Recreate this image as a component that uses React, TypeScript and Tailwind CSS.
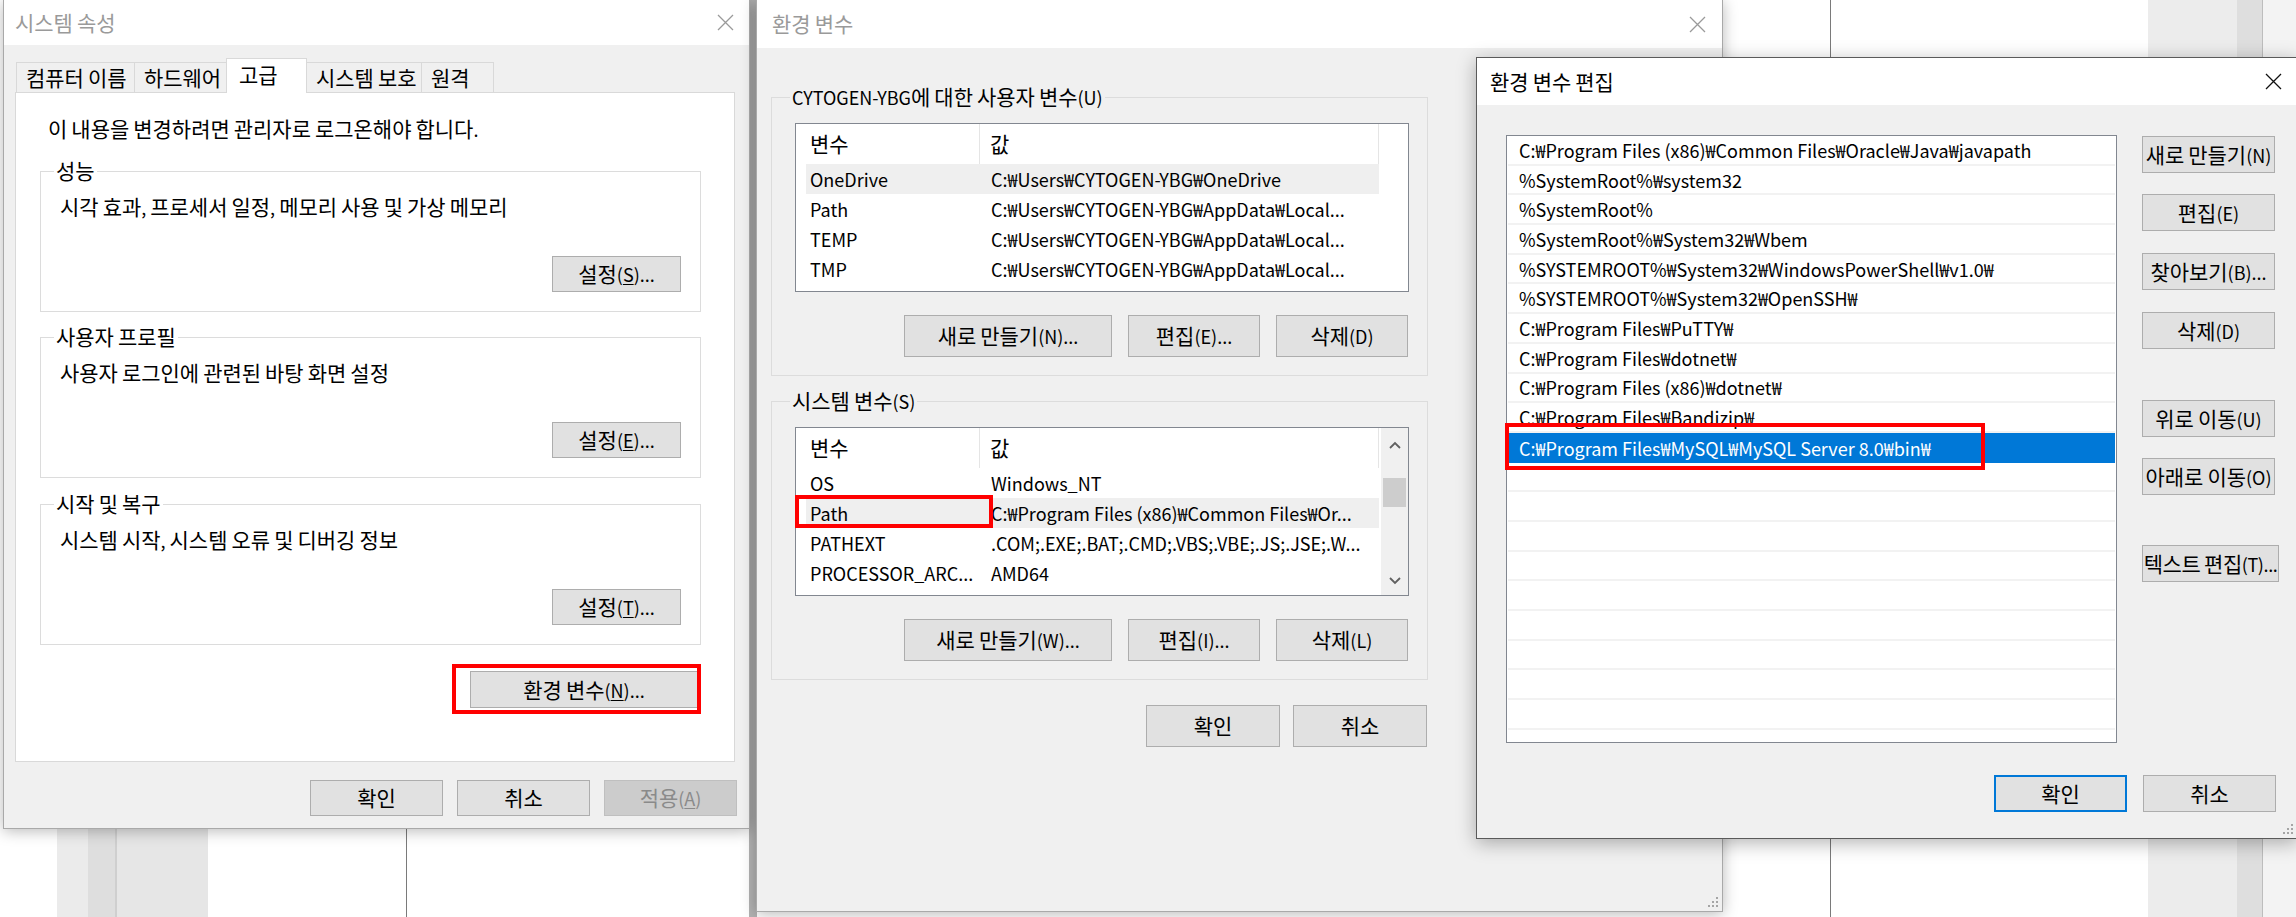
import React from 'react';

// Windows 10 style dialogs: 시스템 속성 / 환경 변수 / 환경 변수 편집

// Malgun Gothic draws Hangul wider than Noto Sans CJK KR, so Hangul runs get a slightly larger size
const HANGUL = /([\u3131-\u318E\uAC00-\uD7A3]+)/;

function kr(text: string): React.ReactNode {
  return (
    <span>
      {text.split(HANGUL).map((part, i) =>
        i % 2 === 1 ? (
          <span key={i} className="text-[1.165em] leading-[0]">
            {part}
          </span>
        ) : (
          part
        ),
      )}
    </span>
  );
}

type BtnProps = {
  children: React.ReactNode;
  className?: string;
  disabled?: boolean;
  primary?: boolean;
};

function Btn({ children, className = '', disabled, primary }: BtnProps) {
  const tone = primary
    ? 'border-2 border-[#0078d7] bg-[#e1e1e1] text-black'
    : disabled
      ? 'border border-[#bfbfbf] bg-[#cccccc] text-[#8a8a8a]'
      : 'border border-[#adadad] bg-[#e1e1e1] text-black';
  return (
    <button type="button" className={['flex shrink-0 items-center justify-center whitespace-nowrap text-[18px] leading-none', tone, className].join(' ')}>
      {typeof children === 'string' ? kr(children) : <span>{children}</span>}
    </button>
  );
}

function CloseX({ dark }: { dark?: boolean }) {
  return (
    <svg width="17" height="17" viewBox="0 0 17 17" className={dark ? 'text-[#111]' : 'text-[#9a9a9a]'}>
      <path d="M1 1L16 16M16 1L1 16" stroke="currentColor" strokeWidth="1.3" fill="none" />
    </svg>
  );
}

function Grip() {
  const dots = [
    [9, 1],
    [9, 5],
    [5, 5],
    [9, 9],
    [5, 9],
    [1, 9],
  ];
  return (
    <svg width="11" height="11" viewBox="0 0 11 11" className="absolute bottom-[4px] right-[4px]">
      {dots.map(([x, y]) => (
        <rect key={`${x}-${y}`} x={x} y={y} width="2" height="2" fill="#a5a5a5" />
      ))}
    </svg>
  );
}

function Chevron({ up }: { up?: boolean }) {
  return (
    <svg width="12" height="8" viewBox="0 0 12 8">
      <path d={up ? 'M1 7L6 2L11 7' : 'M1 1L6 6L11 1'} stroke="#606060" strokeWidth="1.8" fill="none" />
    </svg>
  );
}

function U({ children }: { children: React.ReactNode }) {
  return <span className="underline underline-offset-2">{children}</span>;
}

// =============================================================================
// Window 1: 시스템 속성
// =============================================================================

const TABS = [
  { label: '컴퓨터 이름', w: 'w-[119px]' },
  { label: '하드웨어', w: 'w-[93px]' },
  { label: '고급', w: 'w-[81px]', active: true },
  { label: '시스템 보호', w: 'w-[116px]' },
  { label: '원격', w: 'w-[73px]' },
];

function SettingsGroup({ label, desc, btn, className = '' }: { label: string; desc: string; btn: React.ReactNode; className?: string }) {
  return (
    <fieldset className={['w-[661px] border border-[#dcdcdc] px-[19px] pb-[19px]', className].join(' ')}>
      <legend className="ml-[-6px] px-[2px] leading-[24px]">{kr(label)}</legend>
      <div className="pt-[12px] leading-[24px]">{kr(desc)}</div>
      <div className="mt-[37px] flex justify-end">
        <Btn className="h-[36px] w-[129px]">{btn}</Btn>
      </div>
    </fieldset>
  );
}

function SystemProperties() {
  return (
    <div className="absolute left-[3px] top-0 flex h-[829px] w-[747px] flex-col border border-t-0 border-[#a9a9a9] bg-[#f0f0f0] shadow-[0_2px_14px_rgba(0,0,0,0.28)]">
      <div className="flex h-[45px] items-center justify-between bg-white pl-[11px] pr-[15px]">
        <span className="text-[#9a9a9a]">{kr('시스템 속성')}</span>
        <CloseX />
      </div>
      <div className="flex flex-1 flex-col pl-[11px] pt-[13px]">
        <div className="relative z-10 ml-[2px] flex h-[35px] items-end">
          {TABS.map((t) =>
            t.active ? (
              <div key={t.label} className={`${t.w} -ml-px flex h-[35px] items-start whitespace-nowrap border border-b-0 border-[#d9d9d9] bg-white pl-[12px] pt-[4px]`}>
                {kr(t.label)}
              </div>
            ) : (
              <div key={t.label} className={`${t.w} -ml-px mb-px flex h-[30px] items-center whitespace-nowrap border border-b-0 border-[#d9d9d9] bg-[#f0f0f0] pl-[9px]`}>
                {kr(t.label)}
              </div>
            ),
          )}
        </div>
        <div className="-mt-px h-[670px] w-[720px] border border-[#d9d9d9] bg-white pl-[24px] pt-[24px]">
          <div className="pl-[8px] leading-[24px]">{kr('이 내용을 변경하려면 관리자로 로그온해야 합니다.')}</div>
          <SettingsGroup
            className="mt-[18px]"
            label="성능"
            desc="시각 효과, 프로세서 일정, 메모리 사용 및 가상 메모리"
            btn={<>{kr('설정')}(<U>S</U>)...</>}
          />
          <SettingsGroup
            className="mt-[13px]"
            label="사용자 프로필"
            desc="사용자 로그인에 관련된 바탕 화면 설정"
            btn={<>{kr('설정')}(<U>E</U>)...</>}
          />
          <SettingsGroup
            className="mt-[14px]"
            label="시작 및 복구"
            desc="시스템 시작, 시스템 오류 및 디버깅 정보"
            btn={<>{kr('설정')}(<U>T</U>)...</>}
          />
          <div className="mt-[26px] flex w-[658px] justify-end">
            <Btn className="h-[37px] w-[228px]">
              {kr('환경 변수')}(<U>N</U>)...
            </Btn>
          </div>
        </div>
        <div className="mt-[18px] flex w-[722px] justify-end gap-[14px]">
          <Btn className="h-[36px] w-[133px]">확인</Btn>
          <Btn className="h-[36px] w-[133px]">취소</Btn>
          <Btn disabled className="h-[36px] w-[133px]">
            {kr('적용')}(<U>A</U>)
          </Btn>
        </div>
      </div>
    </div>
  );
}

// =============================================================================
// Window 2: 환경 변수
// =============================================================================

type VarRow = { name: string; value: string; selected?: boolean };

const USER_VARS: VarRow[] = [
  { name: 'OneDrive', value: 'C:₩Users₩CYTOGEN-YBG₩OneDrive', selected: true },
  { name: 'Path', value: 'C:₩Users₩CYTOGEN-YBG₩AppData₩Local...' },
  { name: 'TEMP', value: 'C:₩Users₩CYTOGEN-YBG₩AppData₩Local...' },
  { name: 'TMP', value: 'C:₩Users₩CYTOGEN-YBG₩AppData₩Local...' },
];

const SYSTEM_VARS: VarRow[] = [
  { name: 'OS', value: 'Windows_NT' },
  { name: 'Path', value: 'C:₩Program Files (x86)₩Common Files₩Or...', selected: true },
  { name: 'PATHEXT', value: '.COM;.EXE;.BAT;.CMD;.VBS;.VBE;.JS;.JSE;.W...' },
  { name: 'PROCESSOR_ARC...', value: 'AMD64' },
];

function VarList({ rows, scroll }: { rows: VarRow[]; scroll?: boolean }) {
  return (
    <div className="ml-[23px] flex h-[169px] w-[614px] overflow-hidden border border-[#828790] bg-white">
      <div className="flex w-[583px] shrink-0 flex-col">
        <div className="flex h-[40px] shrink-0">
          <div className="flex w-[184px] items-center border-r border-[#e5e5e5] pl-[14px]">{kr('변수')}</div>
          <div className="flex flex-1 items-center border-r border-[#e5e5e5] pl-[10px]">{kr('값')}</div>
        </div>
        {rows.map((r) => (
          <div key={r.name} className={`ml-[10px] flex h-[30px] shrink-0 items-center whitespace-nowrap ${r.selected ? 'bg-[#efefef]' : ''}`}>
            <div className="w-[174px] pl-[4px]">{r.name}</div>
            <div className="pl-[11px]">{r.value}</div>
          </div>
        ))}
      </div>
      {scroll && (
        <div className="ml-auto flex w-[27px] flex-col items-center bg-[#f0f0f0]">
          <div className="flex h-[34px] items-center">
            <Chevron up />
          </div>
          <div className="w-full flex-1 px-[2px] pt-[16px]">
            <div className="h-[29px] w-full bg-[#cdcdcd]" />
          </div>
          <div className="flex h-[28px] items-center">
            <Chevron />
          </div>
        </div>
      )}
    </div>
  );
}

function VarGroup({ label, rows, btns, scroll, className = '' }: { label: string; rows: VarRow[]; btns: string[]; scroll?: boolean; className?: string }) {
  return (
    <fieldset className={['w-[657px] border border-[#dcdcdc] pb-[18px]', className].join(' ')}>
      <legend className="ml-[18px] px-[2px] leading-[24px]">{kr(label)}</legend>
      <div className="pt-[14px]">
        <VarList rows={rows} scroll={scroll} />
      </div>
      <div className="mt-[23px] flex justify-end gap-[16px] pr-[19px]">
        <Btn className="h-[42px] w-[208px]">{btns[0]}</Btn>
        <Btn className="h-[42px] w-[132px]">{btns[1]}</Btn>
        <Btn className="h-[42px] w-[132px]">{btns[2]}</Btn>
      </div>
    </fieldset>
  );
}

function EnvironmentVariables() {
  return (
    <div className="absolute left-[756px] top-0 flex h-[912px] w-[967px] flex-col border border-t-0 border-[#a9a9a9] bg-[#f0f0f0] shadow-[0_2px_14px_rgba(0,0,0,0.28)]">
      <div className="flex h-[48px] shrink-0 items-center justify-between bg-white pl-[15px] pr-[16px]">
        <span className="text-[#9a9a9a]">{kr('환경 변수')}</span>
        <CloseX />
      </div>
      <div className="flex flex-col pl-[14px] pt-[37px]">
        <VarGroup
          label="CYTOGEN-YBG에 대한 사용자 변수(U)"
          rows={USER_VARS}
          btns={['새로 만들기(N)...', '편집(E)...', '삭제(D)']}
        />
        <VarGroup
          className="mt-[13px]"
          label="시스템 변수(S)"
          rows={SYSTEM_VARS}
          scroll
          btns={['새로 만들기(W)...', '편집(I)...', '삭제(L)']}
        />
        <div className="mt-[25px] flex w-[656px] justify-end gap-[13px]">
          <Btn className="h-[42px] w-[134px]">확인</Btn>
          <Btn className="h-[42px] w-[134px]">취소</Btn>
        </div>
      </div>
      <Grip />
    </div>
  );
}

// =============================================================================
// Window 3: 환경 변수 편집
// =============================================================================

const PATHS = [
  'C:₩Program Files (x86)₩Common Files₩Oracle₩Java₩javapath',
  '%SystemRoot%₩system32',
  '%SystemRoot%',
  '%SystemRoot%₩System32₩Wbem',
  '%SYSTEMROOT%₩System32₩WindowsPowerShell₩v1.0₩',
  '%SYSTEMROOT%₩System32₩OpenSSH₩',
  'C:₩Program Files₩PuTTY₩',
  'C:₩Program Files₩dotnet₩',
  'C:₩Program Files (x86)₩dotnet₩',
  'C:₩Program Files₩Bandizip₩',
  'C:₩Program Files₩MySQL₩MySQL Server 8.0₩bin₩',
];
const SELECTED_PATH = 10;
const ROW_COUNT = 21;

function EditVariable() {
  const rows = Array.from({ length: ROW_COUNT }, (_, i) => PATHS[i] ?? '');
  return (
    <div className="absolute left-[1476px] top-[57px] flex h-[782px] w-[822px] flex-col border border-[#5a5a5a] bg-[#f0f0f0] shadow-[0_4px_18px_rgba(0,0,0,0.3)]">
      <div className="flex h-[47px] shrink-0 items-center justify-between bg-white pl-[13px] pr-[15px]">
        <span className="text-black">{kr('환경 변수 편집')}</span>
        <CloseX dark />
      </div>
      <div className="flex flex-col pl-[29px] pt-[30px]">
        <div className="flex items-start">
          <div className="flex h-[608px] w-[611px] shrink-0 flex-col overflow-hidden border border-[#828790] bg-white px-px">
            {rows.map((p, i) => (
              <div
                key={i}
                className={`flex h-[29.7px] shrink-0 items-center whitespace-nowrap pl-[11px] ${
                  i === SELECTED_PATH ? 'bg-[#0078d7] text-white' : 'border-b-2 border-[#f2f2f2]'
                }`}
              >
                {p}
              </div>
            ))}
          </div>
          <div className="ml-[25px] mt-px flex flex-col">
            <Btn className="h-[37px] w-[133px]">새로 만들기(N)</Btn>
            <Btn className="mt-[21px] h-[37px] w-[133px]">편집(E)</Btn>
            <Btn className="mt-[22px] h-[37px] w-[133px]">찾아보기(B)...</Btn>
            <Btn className="mt-[22px] h-[37px] w-[133px]">삭제(D)</Btn>
            <Btn className="mt-[51px] h-[37px] w-[133px]">위로 이동(U)</Btn>
            <Btn className="mt-[21px] h-[37px] w-[133px]">아래로 이동(O)</Btn>
            <Btn className="mt-[50px] h-[37px] w-[137px] tracking-[-0.4px]">텍스트 편집(T)...</Btn>
          </div>
        </div>
        <div className="mt-[32px] flex w-[770px] justify-end gap-[16px]">
          <Btn primary className="h-[37px] w-[133px]">확인</Btn>
          <Btn className="h-[37px] w-[133px]">취소</Btn>
        </div>
      </div>
      <Grip />
    </div>
  );
}

// =============================================================================
// Desktop behind the dialogs
// =============================================================================

const BG_COLUMNS = [
  'w-[57px] bg-white',
  'w-[31px] bg-[#ebebeb]',
  'w-[27px] bg-[#dedede]',
  'w-[2px] bg-[#cfcfcf]',
  'w-[91px] bg-[#e6e6e6]',
  'w-[198px] bg-white',
  'w-px bg-[#7a7a7a]',
  'w-[342px] bg-white',
  'w-[8px] bg-[#b2b2b2]',
  'w-[1073px] bg-white',
  'w-px bg-[#7a7a7a]',
  'w-[317px] bg-white',
  'w-[89px] bg-[#ececec]',
  'w-[25px] bg-[#dedede]',
  'w-px bg-[#bdbdbd]',
  'flex-1 bg-[#f3f3f3]',
];

export default function App() {
  return (
    <div className="relative h-[917px] w-[2296px] overflow-hidden bg-white font-['Noto_Sans_CJK_KR',sans-serif] text-[18px] leading-[24px] text-black">
      <div className="flex h-full">
        {BG_COLUMNS.map((c, i) => (
          <div key={i} className={`h-full shrink-0 ${c}`} />
        ))}
      </div>

      <SystemProperties />
      <EnvironmentVariables />
      <EditVariable />

      {/* red highlight annotations */}
      <div className="pointer-events-none absolute left-[452px] top-[664px] h-[50px] w-[249px] border-4 border-[#ff0000]" />
      <div className="pointer-events-none absolute left-[795px] top-[495px] h-[33px] w-[198px] border-4 border-[#ff0000]" />
      <div className="pointer-events-none absolute left-[1505px] top-[423px] h-[47px] w-[480px] border-4 border-[#ff0000]" />
    </div>
  );
}
